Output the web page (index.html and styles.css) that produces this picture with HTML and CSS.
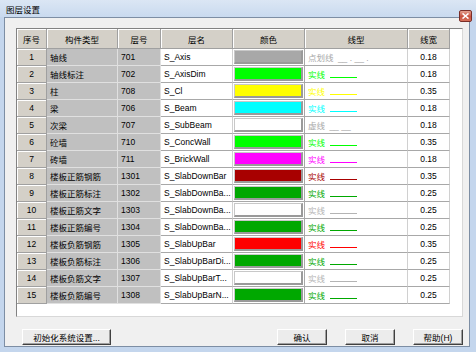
FILE: index.html
```html
<!DOCTYPE html>
<html lang="zh-CN">
<head>
  <meta charset="UTF-8" />
  <title>图层设置</title>
  <link rel="stylesheet" href="styles.css">
</head>
<body>
  <div class="window">
    <div class="titlebar">
      <span class="title">图层设置</span>
      <span class="close-btn">
        <svg width="7" height="6" viewBox="0 0 7 6"><path d="M0.5 0.5 L6.5 5.5 M6.5 0.5 L0.5 5.5" stroke="#fff" stroke-width="1.6"/></svg>
      </span>
    </div>

    <div class="client">
      <div class="grid">
        <table class="layer-table">
          <colgroup>
            <col class="col-index">
            <col class="col-type">
            <col class="col-num">
            <col class="col-name">
            <col class="col-color">
            <col class="col-ltype">
            <col class="col-lwidth">
            <col class="col-rest">
          </colgroup>
          <thead>
            <tr>
              <th>序号</th>
              <th>构件类型</th>
              <th>层号</th>
              <th>层名</th>
              <th>颜色</th>
              <th>线型</th>
              <th>线宽</th>
              <th class="blank"></th>
            </tr>
          </thead>
          <tbody>
            <tr>
              <td class="idx">1</td><td class="ro">轴线</td><td class="ro">701</td><td class="name">S_Axis</td>
              <td class="swatch-cell"><div class="swatch" style="background:#a8a8a8"></div></td>
              <td class="ltype gray">点划线 <span class="pattern">__ . __ .</span></td>
              <td class="lw">0.18</td><td class="blank"></td>
            </tr>
            <tr>
              <td class="idx">2</td><td class="ro">轴线标注</td><td class="ro">702</td><td class="name">S_AxisDim</td>
              <td class="swatch-cell"><div class="swatch" style="background:#00ff00"></div></td>
              <td class="ltype" style="color:#00ff00">实线 <span class="line"></span></td>
              <td class="lw">0.18</td><td class="blank"></td>
            </tr>
            <tr>
              <td class="idx">3</td><td class="ro">柱</td><td class="ro">708</td><td class="name">S_Cl</td>
              <td class="swatch-cell"><div class="swatch" style="background:#ffff00"></div></td>
              <td class="ltype" style="color:#ffff00">实线 <span class="line"></span></td>
              <td class="lw">0.35</td><td class="blank"></td>
            </tr>
            <tr>
              <td class="idx">4</td><td class="ro">梁</td><td class="ro">706</td><td class="name">S_Beam</td>
              <td class="swatch-cell"><div class="swatch" style="background:#00ffff"></div></td>
              <td class="ltype" style="color:#00ffff">实线 <span class="line"></span></td>
              <td class="lw">0.18</td><td class="blank"></td>
            </tr>
            <tr>
              <td class="idx">5</td><td class="ro">次梁</td><td class="ro">707</td><td class="name">S_SubBeam</td>
              <td class="swatch-cell"><div class="swatch" style="background:#ffffff"></div></td>
              <td class="ltype gray">虚线 <span class="pattern">__ __</span></td>
              <td class="lw">0.18</td><td class="blank"></td>
            </tr>
            <tr>
              <td class="idx">6</td><td class="ro">砼墙</td><td class="ro">710</td><td class="name">S_ConcWall</td>
              <td class="swatch-cell"><div class="swatch" style="background:#00ff00"></div></td>
              <td class="ltype" style="color:#00ff00">实线 <span class="line"></span></td>
              <td class="lw">0.35</td><td class="blank"></td>
            </tr>
            <tr>
              <td class="idx">7</td><td class="ro">砖墙</td><td class="ro">711</td><td class="name">S_BrickWall</td>
              <td class="swatch-cell"><div class="swatch" style="background:#ff00ff"></div></td>
              <td class="ltype" style="color:#ff00ff">实线 <span class="line"></span></td>
              <td class="lw">0.18</td><td class="blank"></td>
            </tr>
            <tr>
              <td class="idx">8</td><td class="ro">楼板正筋钢筋</td><td class="ro">1301</td><td class="name">S_SlabDownBar</td>
              <td class="swatch-cell"><div class="swatch" style="background:#a80000"></div></td>
              <td class="ltype" style="color:#a80000">实线 <span class="line"></span></td>
              <td class="lw">0.35</td><td class="blank"></td>
            </tr>
            <tr>
              <td class="idx">9</td><td class="ro">楼板正筋标注</td><td class="ro">1302</td><td class="name">S_SlabDownBa...</td>
              <td class="swatch-cell"><div class="swatch" style="background:#00a800"></div></td>
              <td class="ltype" style="color:#00a800">实线 <span class="line"></span></td>
              <td class="lw">0.25</td><td class="blank"></td>
            </tr>
            <tr>
              <td class="idx">10</td><td class="ro">楼板正筋文字</td><td class="ro">1303</td><td class="name">S_SlabDownBa...</td>
              <td class="swatch-cell"><div class="swatch" style="background:#ffffff"></div></td>
              <td class="ltype" style="color:#b4b4b4">实线 <span class="line"></span></td>
              <td class="lw">0.25</td><td class="blank"></td>
            </tr>
            <tr>
              <td class="idx">11</td><td class="ro">楼板正筋编号</td><td class="ro">1304</td><td class="name">S_SlabDownBa...</td>
              <td class="swatch-cell"><div class="swatch" style="background:#00a800"></div></td>
              <td class="ltype" style="color:#00a800">实线 <span class="line"></span></td>
              <td class="lw">0.25</td><td class="blank"></td>
            </tr>
            <tr>
              <td class="idx">12</td><td class="ro">楼板负筋钢筋</td><td class="ro">1305</td><td class="name">S_SlabUpBar</td>
              <td class="swatch-cell"><div class="swatch" style="background:#ff0000"></div></td>
              <td class="ltype" style="color:#ff0000">实线 <span class="line"></span></td>
              <td class="lw">0.35</td><td class="blank"></td>
            </tr>
            <tr>
              <td class="idx">13</td><td class="ro">楼板负筋标注</td><td class="ro">1306</td><td class="name">S_SlabUpBarDi...</td>
              <td class="swatch-cell"><div class="swatch" style="background:#00a800"></div></td>
              <td class="ltype" style="color:#00a800">实线 <span class="line"></span></td>
              <td class="lw">0.25</td><td class="blank"></td>
            </tr>
            <tr>
              <td class="idx">14</td><td class="ro">楼板负筋文字</td><td class="ro">1307</td><td class="name">S_SlabUpBarT...</td>
              <td class="swatch-cell"><div class="swatch" style="background:#ffffff"></div></td>
              <td class="ltype" style="color:#b4b4b4">实线 <span class="line"></span></td>
              <td class="lw">0.25</td><td class="blank"></td>
            </tr>
            <tr>
              <td class="idx">15</td><td class="ro">楼板负筋编号</td><td class="ro">1308</td><td class="name">S_SlabUpBarN...</td>
              <td class="swatch-cell"><div class="swatch" style="background:#00a800"></div></td>
              <td class="ltype" style="color:#00a800">实线 <span class="line"></span></td>
              <td class="lw">0.25</td><td class="blank"></td>
            </tr>
          </tbody>
        </table>
      </div>

      <div class="button-row">
        <button class="btn btn-init">初始化系统设置...</button>
        <div class="spacer"></div>
        <button class="btn">确认</button>
        <button class="btn">取消</button>
        <button class="btn">帮助(H)</button>
      </div>
    </div>
  </div>
</body>
</html>
```

FILE: styles.css
```css
body {
  margin: 0;
  font-family: "Liberation Sans", "Noto Sans CJK SC", sans-serif;
  font-size: 8.5px;
  color: #000;
}

.window {
  position: relative;
  width: 476px;
  height: 352px;
  box-sizing: border-box;
  padding: 0 6px 5px 4px;
  display: flex;
  flex-direction: column;
  background: #c4d6ed;
}

.titlebar {
  height: 17px;
  margin: 0 -6px 0 -4px;
  padding-left: 6px;
  display: flex;
  align-items: center;
  background: linear-gradient(#dbe6f4, #c9daef);
}

.title {
  color: #000;
}

.close-btn {
  position: absolute;
  top: 10px;
  right: 4px;
  width: 13px;
  height: 12px;
  box-sizing: border-box;
  border: 1px solid #7a2e28;
  border-radius: 2px;
  background: linear-gradient(#e4a08f, #c8513f 55%, #d6705a);
  display: flex;
  align-items: center;
  justify-content: center;
}

.client {
  flex: 1;
  border: 1px solid #7d8ea4;
  background: #f0f0f0;
  padding: 10px 6px 0 11px;
  display: flex;
  flex-direction: column;
}

.grid {
  width: 447px;
  height: 289px;
  box-sizing: border-box;
  border: 1px solid #828282;
  border-right-color: #d8d8d8;
  border-bottom-color: #d8d8d8;
  background: #fff;
  overflow: hidden;
}

.layer-table {
  table-layout: fixed;
  border-collapse: separate;
  border-spacing: 0;
  width: 445px;
}

/* column widths */
.col-index { width: 30px; }
.col-type { width: 71px; }
.col-num { width: 43px; }
.col-name { width: 72px; }
.col-color { width: 72px; }
.col-ltype { width: 103px; }
.col-lwidth { width: 42px; }
.col-rest { width: 12px; }

.layer-table th {
  height: 20px;
  box-sizing: border-box;
  padding: 0;
  font-weight: normal;
  text-align: center;
  background: #d4d0c8;
  border-right: 1px solid #a0a0a0;
  border-bottom: 1px solid #a0a0a0;
  box-shadow: inset 1px 1px #fff;
}

.layer-table th.blank,
.layer-table td.blank {
  background: #fff;
  border: none;
  box-shadow: none;
}

.layer-table td {
  height: 17px;
  box-sizing: border-box;
  padding: 0 3px;
  white-space: nowrap;
  overflow: hidden;
  border-right: 1px solid #d0d0d0;
  border-bottom: 1px solid #a8a8a8;
}

.layer-table td.idx {
  text-align: center;
  background: #d4d0c8;
  border-right: 1px solid #a0a0a0;
  border-bottom: 1px solid #a0a0a0;
  box-shadow: inset 1px 1px #fff;
}

.layer-table td.ro {
  background: #c0c0c0;
  border-right: 1px solid #e0e0e0;
  border-bottom: 1px solid #e0e0e0;
}

.layer-table td.swatch-cell {
  padding: 1px 1px 1px 1px;
  border-right: 1px solid #a8a8a8;
}

.swatch {
  height: 14px;
  box-sizing: border-box;
  border-top: 1px solid #c8c8c8;
  border-left: 1px solid #c8c8c8;
  border-right: 2px solid #9a9a9a;
  border-bottom: 2px solid #9a9a9a;
}

.ltype.gray {
  color: #a8a8a8;
}

.line {
  display: inline-block;
  width: 27px;
  height: 0;
  margin-left: 3px;
  border-bottom: 1px solid currentColor;
}

.pattern {
  margin-left: 2px;
}

.lw {
  text-align: center;
}

.button-row {
  display: flex;
  align-items: center;
  gap: 18px;
  margin-top: 12px;
  padding-left: 6px;
}

.spacer {
  flex: 1;
}

.btn {
  height: 16px;
  width: 50px;
  padding: 0;
  font-family: inherit;
  font-size: 8.5px;
  color: #000;
  background: #ececec;
  border: 1px solid;
  border-color: #fff #404040 #404040 #fff;
  box-shadow: inset -1px -1px #a0a0a0;
}

.btn-init {
  width: 89px;
}
```
